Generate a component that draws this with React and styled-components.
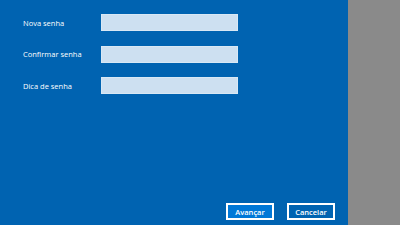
import styled, { createGlobalStyle } from 'styled-components';

const GlobalStyle = createGlobalStyle`
  html, body {
    margin: 0;
    padding: 0;
    width: 400px;
    height: 225px;
    overflow: hidden;
  }
  body {
    font-family: "Open Sans", "Noto Sans", "Liberation Sans", sans-serif;
  }
`;

const fields = ['Nova senha', 'Confirmar senha', 'Dica de senha'];

const App = () => {
  return (
    <>
      <GlobalStyle />
      <Screen>
        <Panel>
          <Form>
            {fields.map((label) => (
              <Row key={label}>
                <Label>{label}</Label>
                <Input type="text" />
              </Row>
            ))}
          </Form>
          <Footer>
            <Button primary>Avançar</Button>
            <Button>Cancelar</Button>
          </Footer>
        </Panel>
        <Side />
      </Screen>
    </>
  );
};
export default App;

export const Screen = styled.div`
  display: flex;
  width: 400px;
  height: 225px;
`;

export const Panel = styled.div`
  width: 348px;
  display: flex;
  flex-direction: column;
  justify-content: space-between;
  background-color: #0063b1;
`;

export const Side = styled.div`
  flex-grow: 1;
  background-color: #8a8a8a;
`;

export const Form = styled.div`
  display: flex;
  flex-direction: column;
  gap: 14.5px;
  padding: 14px 0 0 23px;
`;

export const Row = styled.div`
  display: grid;
  grid-template-columns: 78px 137px;
  align-items: center;
`;

export const Label = styled.label`
  font-size: 7.5px;
  color: #ffffff;
`;

export const Input = styled.input`
  box-sizing: border-box;
  width: 137px;
  height: 17px;
  margin: 0;
  padding: 0 3px;
  border: 1px solid #d8e8f5;
  background-color: #cde0f1;
  outline: none;
`;

export const Footer = styled.div`
  display: flex;
  justify-content: flex-end;
  gap: 13px;
  padding: 0 13px 5px 0;
`;

export const Button = styled.button`
  box-sizing: border-box;
  width: 48px;
  height: 17px;
  padding: 0;
  border: 2px solid #ffffff;
  background-color: ${(props) => (props.primary ? '#0078d7' : '#0063b1')};
  color: #ffffff;
  font-family: "Open Sans", "Noto Sans", "Liberation Sans", sans-serif;
  font-size: 7.5px;
  font-weight: 600;
`;
